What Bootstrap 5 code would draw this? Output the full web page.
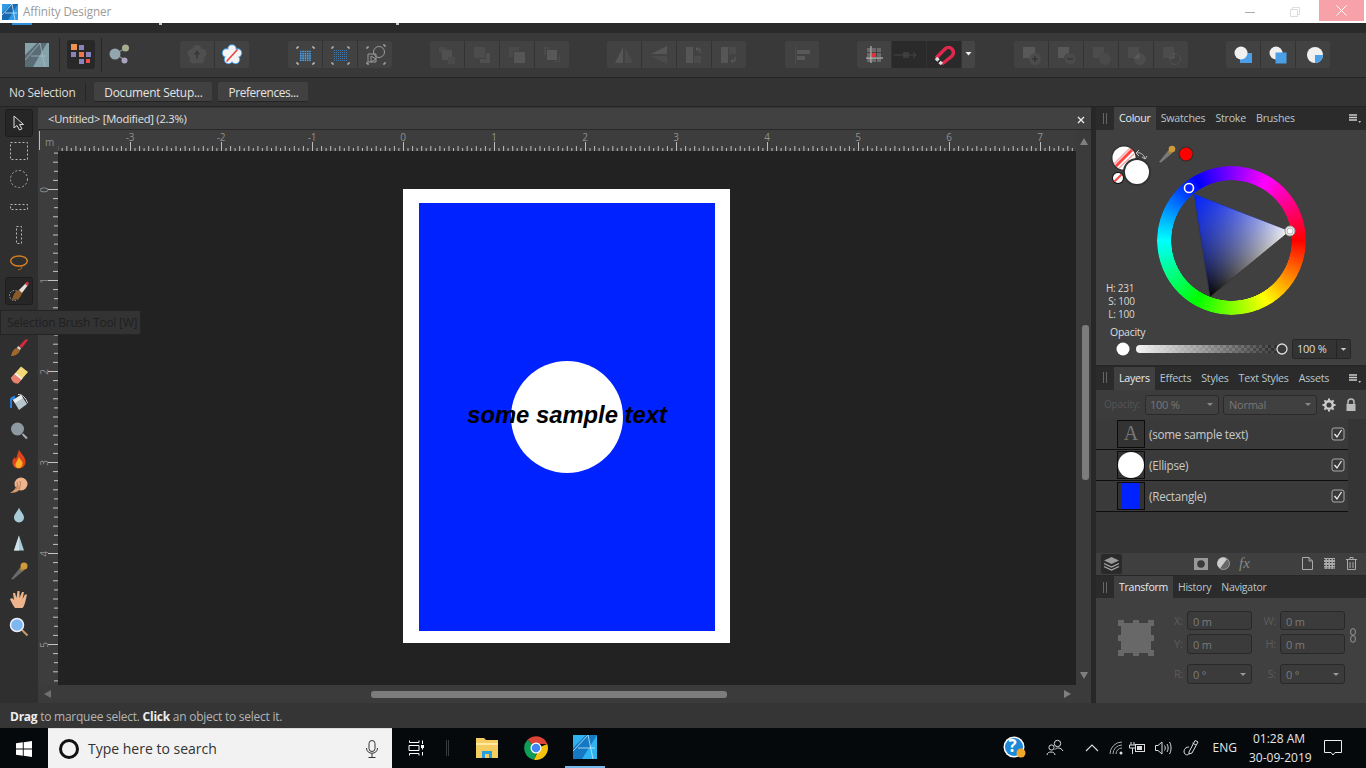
<!DOCTYPE html>
<html lang="en"><head><meta charset="utf-8"><title>Affinity Designer</title>
<link href="https://cdn.jsdelivr.net/npm/bootstrap@5.3.0/dist/css/bootstrap.min.css" rel="stylesheet">
<style>
html,body{height:768px;overflow:hidden;background:#000}
body{font-family:"Open Sans","Noto Sans",sans-serif;font-size:11.5px;letter-spacing:-.25px;color:#ddd;width:1366px}
svg{display:block;flex:none}
.titlebar{height:23px;background:#fff;color:#9a9a9a;font-size:11.7px;letter-spacing:-.1px}
.wintitle{margin-left:5px}
.winbtn{width:45px;height:21px}
.winmid{margin-right:1.5px}
.winclose{background:#f7a1a8;margin-right:2px}
.menustrip{height:10px;background:#2a2a2a}
.mstub{height:2px;background:#2f8fd8;width:20px;margin-left:12px}
.mtick{width:3px;height:2px;background:#ccc}
.toolbar{height:45px;background:#393939;border-bottom:1px solid #242424;padding:7px 0 0 25px}
.tsep{width:1px;height:34px;background:#262626;margin-top:-2px}
.tgroup{display:flex;gap:1px;height:27px;margin-top:1px;background:#333;border-radius:2px;overflow:hidden}
.tbtn{width:34px;height:27px;background:#424242}
.tbtn.on{background:#2a2a2a}
.tbtn.tiny{width:13px;background:#454545}
.personas{width:28px;height:29px;background:#282828;border-radius:3px;margin:0 6px 0 7px}
.contextbar{height:29px;background:#333;border-bottom:1px solid #242424;padding:1px 0 0 9px;font-size:11.9px;letter-spacing:-.25px}
.ctxsep{width:1px;height:19px;background:#262626;margin:-1px 8px 0 10px}
.ctxbtn{height:20px;background:#414141;border-bottom:1px solid #242424;border-radius:2px;color:#e4e4e4;margin-right:6px;margin-top:-1px;padding-top:1px;line-height:19px;white-space:nowrap;text-align:center}
.ctxdoc{width:118px}
.ctxpref{width:90px;letter-spacing:-.4px}
.workspace{height:596px;background:#272727}
.toolcol{width:38px;background:#2f2f2f;padding-top:2px}
.toolcell{width:28px;height:28px;margin-left:5px;border-radius:3px;border:1px solid transparent}
.toolcell.on{background:#262626;border-color:#1d1d1d}
.toolcell svg{margin:0 auto}
.tipbox{left:0;top:203px;width:141px;height:25px;background:#333;border:1px solid #242424;color:#202020;font-size:12px;padding-left:6px;line-height:23px;white-space:nowrap;z-index:5}
.docarea{width:1053px;margin-right:5px}
.doctab{height:23px;background:#414141;border-bottom:1px solid #282828;border-top:1px solid #353535;padding:2px 6px 0 10px;color:#e2e2e2;font-size:11.2px}
.stage{height:573px;display:grid;grid-template-columns:20px 1018px 15px;grid-template-rows:21px 534px 18px;background:#3d3d3d}
.rcorner{color:#8c8c8c;font-size:10px;padding:5px 0 0 7px}
.rcorner::before{content:"";position:absolute;left:1px;top:1px;height:19px;width:1px;background:#bbb}
.rlabel{color:#8f8f8f;font-size:10px;line-height:10px;transform:translateX(-50%);top:2px}
.vlabel{color:#8f8f8f;font-size:10px;line-height:10px;left:3px;transform:translateY(-50%) rotate(-90deg)}
.view{background:#222;overflow:hidden}
.artboard{left:345px;top:38px;width:327px;height:454px;background:#fff;padding:14px 15px 12px 16px}
.fillrect{width:296px;height:428px;background:#0022ff}
.orb{width:112px;height:112px;border-radius:50%;background:#fff}
.sampletext{font:italic bold 23.8px "Liberation Sans",sans-serif;letter-spacing:0;color:#000;white-space:nowrap;left:50%;top:50%;transform:translate(-50%,-56%)}
.vscroll{background:#3b3b3b;grid-row:1/3;grid-column:3}
.vthumb{left:6px;top:195px;width:7px;height:155px;background:#7c7c7c;border-radius:3px}
.hscroll{grid-column:1/4;background:#3b3b3b}
.hthumb{left:333px;top:6px;width:356px;height:7px;background:#7c7c7c;border-radius:3px}
.panelcol{width:270px}
.panel{background:#404040}
.ptabs{height:23px;background:#2b2b2b;font-size:10.7px;color:#b9c6cc}
.pgrip{width:18px;height:22px}
.ptab{padding:0 5px;line-height:22px;white-space:nowrap;height:23px}
.ptab.on{background:#404040;color:#e6edf0}
.ptabs.short{height:22px;font-size:10.5px}
.ptabs.short .ptab{height:22px;line-height:22px}
.colourbody{height:235px}
.hslblock{font-size:10px;line-height:13px;padding:0 0 0 10px;color:#d8d8d8}
.ringbox{width:149px;height:149px;margin-top:0}
.ring{width:149px;height:149px;border-radius:50%;background:conic-gradient(from 90deg,#f00,#ff0,#0f0,#0ff,#00f,#f0f,#f00);-webkit-mask:radial-gradient(circle,transparent 60px,#000 60.5px);mask:radial-gradient(circle,transparent 60px,#000 60.5px)}
.ringover{left:0;top:0}
.oplabel{padding-left:14px;font-size:10.5px;line-height:14px;margin-top:4px}
.sliderbar{width:151px;height:8px;border-radius:4px;background:linear-gradient(90deg,rgba(255,255,255,.95),rgba(255,255,255,0) 90%),repeating-conic-gradient(#4a4a4a 0 25%,#303030 0 50%) 0 0/6px 6px}
.spin{height:20px;background:#333;border:1px solid #262626;border-radius:2px;color:#ddd;font-size:11px}
.layerstools{height:29px;background:#3c3c3c;padding:1px 0 0 8px;color:#555;font-size:10px}
.selectbox{height:20px;background:#404040;border:1px solid #2a2a2a;border-radius:3px;color:#777;font-size:11px;padding:1px 0 0 4px}
.layerlist{height:134px;background:#353535}
.layerrow{height:31px;width:252px;background:#3a3a3a;border-bottom:1px solid #0e0e0e;padding-left:21px;color:#c9c9c9;font-size:11.7px}
.layerrow span{padding-top:3px}
.checkmark{margin-right:3px}
.thumbbox{width:28px;height:28px;background:#333;border:1px solid #0c0c0c;margin-right:4px}
.tiny-a{font:20px "Liberation Serif",serif;color:#777;letter-spacing:0}
.layersfoot{height:22px;background:#3f3f3f;border-bottom:0}
.stackbtn{width:21px;height:20px;background:#2a2a2a;margin-left:5px;border-radius:2px}
.panelgap{height:2px;background:#272727}
.xformbody{height:105px;padding-top:13px;display:grid;grid-template-columns:78px 13px 65px 28px 65px 21px;grid-template-rows:19px 20px 26px;row-gap:4px;color:#5c5c5c;font-size:11px}
.xformbody span{line-height:20px}
.xformbody .rowthree{margin-top:6px}
.xfield{background:#3b3b3b;border:1px solid #282828;border-radius:3px;color:#7a7a7a;font-size:11px;padding:1px 0 0 5px;line-height:17px}
.statusbar{height:25px;background:#353535;color:#b4b4b4;padding:3px 0 0 10px;font-size:12px}
.statusbar b{color:#eee;font-weight:700}
.taskbar{height:40px;background:#05090c;color:#e6e6e6}
.searchbox{width:344px;height:40px;background:#f2f2f2;border-top:1px solid #dcdcdc;margin-left:48px;padding-left:10px;color:#333;font-size:14px;letter-spacing:0}
.tasksel{width:40px;height:40px;border-bottom:2px solid #76b9ed;margin-left:7px}
.clockbox{font-size:12px;line-height:19px;text-align:center;letter-spacing:0;width:60px;white-space:nowrap}
.lang{font-size:12px;letter-spacing:0}
</style></head><body>

<div class="titlebar d-flex align-items-center">
 <svg width="16" height="16" viewBox="0 0 16 16" style="margin-left:2px"><rect width="16" height="16" fill="#2f9ae6"/><path d="M0 16V9L9 0H16L6 16Z" fill="#1869ad"/><path d="M0 11L10 0M10 0L13 16M3 9H15" stroke="#cdeaff" stroke-width=".8" fill="none"/></svg>
 <span class="wintitle flex-grow-1">Affinity Designer</span>
 <div class="winbtn d-flex align-items-center justify-content-center"><svg width="10" height="10" viewBox="0 0 10 10"><path d="M0 5.5H10" stroke="#aaa"/></svg></div>
 <div class="winbtn winmid d-flex align-items-center justify-content-center"><svg width="10" height="10" viewBox="0 0 10 10"><path d="M.5 2.5H7.5V9.5H.5ZM2.5 2.5V.5H9.5V7.5H7.5" stroke="#ddd" fill="none"/></svg></div>
 <div class="winbtn winclose d-flex align-items-center justify-content-center align-self-start"><svg width="11" height="11" viewBox="0 0 11 11"><path d="M.5.5L10.5 10.5M10.5.5L.5 10.5" stroke="#fff"/></svg></div>
</div>
<div class="menustrip d-flex align-items-start"><div class="mstub"></div><div class="mtick" style="margin-left:127px"></div><div class="mtick" style="margin-left:234px"></div></div>

<div class="toolbar d-flex align-items-start">
 <svg width="24" height="24" viewBox="0 0 24 24" style="margin-top:3px"><rect width="24" height="24" fill="#86a3ab"/><path d="M0 24V12L12 0H22L8 24Z" fill="#5a6d77"/><path d="M0 17L15 0M15 0L20 24M6 13H21" stroke="#a9c0c7" stroke-width=".7" fill="none"/></svg>
 <div class="tsep" style="margin-left:10px"></div>
 <div class="personas"><svg width="28" height="29" viewBox="0 0 28 29"><rect x="4" y="4" width="6" height="6" fill="#f0914f"/><rect x="12" y="5" width="5" height="5" fill="#8a83c0"/><rect x="4" y="12" width="5" height="5" fill="#8a83c0"/><rect x="12" y="12" width="5" height="5" fill="#f0744a"/><rect x="19" y="12" width="5" height="5" fill="#8a83c0"/><rect x="12" y="19" width="5" height="5" fill="#8a83c0"/><rect x="19" y="19" width="4" height="4" fill="#ee5050"/></svg></div>
 <div class="tsep"></div>
 <svg width="22" height="22" viewBox="0 0 22 22" style="margin:4px 0 0 7px"><path d="M6 10L17 4M6 10L16 16" stroke="#8a8f90" stroke-width="1.2"/><circle cx="6" cy="10" r="5.500" fill="#93a6b0"/><circle cx="16.500" cy="4" r="3.500" fill="#a3ae8f"/><circle cx="15.500" cy="16.500" r="3" fill="#a9a3bf"/></svg>

 <div class="tgroup" style="margin-left:49px">
  <div class="tbtn"><svg width="34" height="27" viewBox="0 0 34 27"><g fill="#4f4f4f"><circle cx="17" cy="8.5" r="4.5"/><circle cx="22" cy="12.2" r="4.5"/><circle cx="20" cy="18" r="4.5"/><circle cx="14" cy="18" r="4.5"/><circle cx="12" cy="12.2" r="4.5"/></g><path d="M17 18V11M14.500 13.500L17 10.500L19.500 13.500" stroke="#393939" stroke-width="1.500" fill="none"/></svg></div>
  <div class="tbtn"><svg width="34" height="27" viewBox="0 0 34 27"><g fill="#4aa0e6"><circle cx="17" cy="8" r="4.700"/><circle cx="22.500" cy="12" r="4.700"/><circle cx="20.500" cy="18.500" r="4.700"/><circle cx="13.500" cy="18.500" r="4.700"/><circle cx="11.500" cy="12" r="4.700"/></g><g fill="#f4f4f4"><circle cx="17" cy="8" r="3.700"/><circle cx="22.500" cy="12" r="3.700"/><circle cx="20.500" cy="18.500" r="3.700"/><circle cx="13.500" cy="18.500" r="3.700"/><circle cx="11.500" cy="12" r="3.700"/><circle cx="17" cy="14" r="5"/></g><path d="M11.500 20.500L22.500 8.500" stroke="#e8403c" stroke-width="1.500"/></svg></div>
 </div>
 <div class="tgroup" style="margin-left:39px">
  <div class="tbtn"><svg width="34" height="27" viewBox="0 0 34 27"><path d="M9 8V6H11M24 6H26V8M26 21V23H24M11 23H9V21" stroke="#ddd" fill="none"/><path d="M12 10.500H23M12 12.700H23M12 14.900H23M12 17.100H23M12 19.300H23" stroke="#4a9fe6" stroke-width="1.600" stroke-dasharray="1.600 .7"/></svg></div>
  <div class="tbtn"><svg width="34" height="27" viewBox="0 0 34 27"><path d="M9 8V6H11M24 6H26V8M26 21V23H24M11 23H9V21" stroke="#ccc" fill="none"/><path d="M11 9.500H24M11 11.500H24M11 13.500H24M11 15.500H24M11 17.500H24M11 19.500H24" stroke="#3b78ad" stroke-dasharray="1 1"/></svg></div>
  <div class="tbtn"><svg width="34" height="27" viewBox="0 0 34 27"><path d="M9 8V6H11M25 4H27V6M27 21V23H25M11 23H9V21" stroke="#bbb" fill="none"/><path d="M10 13H18V21H10Z" fill="none" stroke="#999"/><circle cx="21" cy="11" r="5.500" fill="none" stroke="#999"/><path d="M13 15L18 18L13 21Z" fill="none" stroke="#999"/></svg></div>
 </div>
 <div class="tgroup" style="margin-left:38px">
  <div class="tbtn"><svg width="34" height="27" viewBox="0 0 34 27"><rect x="9" y="6" width="7" height="6" fill="#4a4a4a"/><rect x="12" y="9" width="10" height="10" fill="#505050"/><rect x="18" y="16" width="7" height="7" fill="#4a4a4a"/></svg></div>
  <div class="tbtn"><svg width="34" height="27" viewBox="0 0 34 27"><rect x="9" y="6" width="11" height="11" fill="#4c4c4c"/><path d="M25 12V22H15V18H21V12Z" fill="#505050"/></svg></div>
  <div class="tbtn"><svg width="34" height="27" viewBox="0 0 34 27"><path d="M9 6H19V10H13V16H9Z" fill="#4a4a4a"/><rect x="14" y="11" width="11" height="11" fill="#565656"/></svg></div>
  <div class="tbtn"><svg width="34" height="27" viewBox="0 0 34 27"><path d="M9 6H15V8H11V14H9Z" fill="#4a4a4a"/><rect x="12" y="9" width="10" height="10" fill="#585858"/><path d="M25 14V21H19V20H24V14Z" fill="#4a4a4a"/></svg></div>
 </div>
 <div class="tgroup" style="margin-left:38px">
  <div class="tbtn"><svg width="34" height="27" viewBox="0 0 34 27"><path d="M16 6V22H8Z" fill="#565656"/><path d="M18 6V22H26Z" fill="#4b4b4b"/></svg></div>
  <div class="tbtn"><svg width="34" height="27" viewBox="0 0 34 27"><path d="M25 5V13H9Z" fill="#565656"/><path d="M25 15V23L9 15Z" fill="#4b4b4b"/></svg></div>
  <div class="tbtn"><svg width="34" height="27" viewBox="0 0 34 27"><rect x="9" y="6" width="7" height="16" fill="#565656"/><rect x="17" y="15" width="7" height="7" fill="#4b4b4b"/><path d="M23 12V8H19M21 6L19 8L21 10" stroke="#5c5c5c" fill="none"/></svg></div>
  <div class="tbtn"><svg width="34" height="27" viewBox="0 0 34 27"><rect x="9" y="6" width="7" height="16" fill="#565656"/><rect x="17" y="6" width="7" height="7" fill="#4b4b4b"/><path d="M23 16V20H19M21 18L19 20L21 22" stroke="#5c5c5c" fill="none"/></svg></div>
 </div>
 <div class="tgroup" style="margin-left:39px">
  <div class="tbtn"><svg width="34" height="27" viewBox="0 0 34 27"><path d="M10.500 5V23" stroke="#4c4c4c"/><rect x="12" y="9" width="13" height="4" fill="#585858"/><rect x="12" y="15" width="8" height="4" fill="#585858"/></svg></div>
 </div>
 <div class="tgroup" style="margin-left:38px">
  <div class="tbtn"><svg width="34" height="27" viewBox="0 0 34 27"><g fill="#6a6a6a"><rect x="10" y="7" width="4" height="4"/><rect x="15" y="7" width="4" height="4"/><rect x="20" y="7" width="4" height="4"/><rect x="10" y="12" width="4" height="4"/><rect x="20" y="12" width="4" height="4"/><rect x="10" y="17" width="4" height="4"/><rect x="15" y="17" width="4" height="4"/><rect x="20" y="17" width="4" height="4"/></g><rect x="15" y="12" width="4" height="4" fill="#e43030"/><path d="M14 5V22M9 17H26" stroke="#ccc"/></svg></div>
  <div class="tbtn on"><svg width="34" height="27" viewBox="0 0 34 27"><rect x="11" y="11" width="6" height="6" fill="#3c3c3c"/><path d="M2 14H24M21 11L24 14L21 17" stroke="#444" fill="none"/></svg></div>
  <div class="tbtn on"><svg width="34" height="27" viewBox="0 0 34 27"><path d="M9 17L18 8A4.500 4.500 0 0 1 25 15L15 23" fill="none" stroke="#e0284c" stroke-width="3.500"/><path d="M9 17L11.500 19.500M15 23L12.500 21" stroke="#ddd" stroke-width="3.500"/></svg></div>
  <div class="tbtn tiny"><svg width="13" height="27" viewBox="0 0 13 27"><path d="M3.500 11H9.500L6.500 14.500Z" fill="#eee"/></svg></div>
 </div>
 <div class="tgroup" style="margin-left:39px">
  <div class="tbtn"><svg width="34" height="27" viewBox="0 0 34 27"><rect x="9" y="6" width="12" height="11" fill="#585858"/><circle cx="21" cy="18" r="6" fill="#4c4c4c"/><path d="M18 18H24M21 15V21" stroke="#2c2c2c"/></svg></div>
  <div class="tbtn"><svg width="34" height="27" viewBox="0 0 34 27"><path d="M9 6H20V12A6 6 0 0 0 15 17H9Z" fill="#585858"/><circle cx="21" cy="18" r="5.500" fill="#4a4a4a"/><path d="M18 18H24" stroke="#2c2c2c"/></svg></div>
  <div class="tbtn"><svg width="34" height="27" viewBox="0 0 34 27"><rect x="9" y="6" width="11" height="11" fill="#4c4c4c"/><path d="M15 17H20V12A6 6 0 0 1 15 17Z" fill="#3a3a3a"/><circle cx="21" cy="18" r="6" fill="#4a4a4a"/></svg></div>
  <div class="tbtn"><svg width="34" height="27" viewBox="0 0 34 27"><rect x="9" y="6" width="11" height="11" fill="#4c4c4c"/><circle cx="21" cy="18" r="6" fill="#4c4c4c"/><path d="M15 17H20V12" fill="#5a5a5a" stroke="#5a5a5a"/></svg></div>
  <div class="tbtn"><svg width="34" height="27" viewBox="0 0 34 27"><rect x="9" y="6" width="11" height="11" fill="#4c4c4c"/><circle cx="21" cy="18" r="5.500" fill="none" stroke="#505050"/><path d="M15 17H20V12" fill="none" stroke="#5a5a5a"/></svg></div>
 </div>
 <div class="tgroup" style="margin-left:38px">
  <div class="tbtn"><svg width="34" height="27" viewBox="0 0 34 27"><path d="M17 12H26V22H14V17Z" fill="#4a9fe6"/><circle cx="15" cy="12" r="6.500" fill="#f0f0f0"/></svg></div>
  <div class="tbtn"><svg width="34" height="27" viewBox="0 0 34 27"><circle cx="15" cy="12" r="6.500" fill="#f0f0f0"/><rect x="14.500" y="11.500" width="11" height="11" fill="#4a9fe6"/></svg></div>
  <div class="tbtn"><svg width="34" height="27" viewBox="0 0 34 27"><circle cx="19" cy="14" r="8" fill="#f0f0f0"/><path d="M19 14H27A8 8 0 0 1 19 22Z" fill="#4a9fe6"/></svg></div>
 </div>
</div>

<div class="contextbar d-flex align-items-center">
 <span>No Selection</span><div class="ctxsep"></div>
 <div class="ctxbtn ctxdoc">Document Setup...</div><div class="ctxbtn ctxpref">Preferences...</div>
</div>

<div class="workspace d-flex">
 <div class="toolcol position-relative">
  <div class="toolcell on d-flex align-items-center"><svg width="16" height="18" viewBox="0 0 16 18"><path d="M3 2V14L6 11.500L8.500 16L11 14.800L8.500 10.500H12.500Z" fill="#2a2a2a" stroke="#ddd"/></svg></div>
  <div class="toolcell d-flex align-items-center"><svg width="20" height="20" viewBox="0 0 20 20"><rect x="1.500" y="1.500" width="17" height="17" fill="none" stroke="#bbb" stroke-dasharray="2 2"/></svg></div>
  <div class="toolcell d-flex align-items-center"><svg width="20" height="20" viewBox="0 0 20 20"><circle cx="10" cy="10" r="8.500" fill="none" stroke="#aaa" stroke-dasharray="2 2"/></svg></div>
  <div class="toolcell d-flex align-items-center"><svg width="20" height="8" viewBox="0 0 20 8"><rect x="1.500" y="1.500" width="17" height="5" fill="none" stroke="#bbb" stroke-dasharray="2 2"/></svg></div>
  <div class="toolcell d-flex align-items-center"><svg width="8" height="20" viewBox="0 0 8 20"><rect x="1.500" y="1.500" width="5" height="17" fill="none" stroke="#bbb" stroke-dasharray="2 2"/></svg></div>
  <div class="toolcell d-flex align-items-center"><svg width="20" height="18" viewBox="0 0 20 18"><ellipse cx="10" cy="7" rx="8.300" ry="5" fill="none" stroke="#d97f22" stroke-width="1.500"/><path d="M9 12C14 12 14 15 9 16" fill="none" stroke="#b86d20"/></svg></div>
  <div class="toolcell on d-flex align-items-center"><svg width="22" height="22" viewBox="0 0 22 22"><circle cx="6.500" cy="15.500" r="5" fill="none" stroke="#aaa" stroke-dasharray="1.500 1.500"/><path d="M4 20C5 15 7 11 11 10L14 13C13 18 9 20 4 20Z" fill="#8a5a2a"/><path d="M11 10L18 3L20 5L14 13Z" fill="#e8e0d8"/><path d="M17 4L19 1.500L21 3L19.500 6Z" fill="#d8344a"/></svg></div>
  <div class="toolcell"></div>
  <div class="toolcell d-flex align-items-center"><svg width="20" height="20" viewBox="0 0 20 20"><path d="M2 19C3 15 4 12 8 11L11 13C10 17 6 19 2 19Z" fill="#a0682e"/><path d="M8 11L9 9L12 11L11 13Z" fill="#ddd"/><path d="M10 9L17 2L19 3L13 11Z" fill="#d8283c"/></svg></div>
  <div class="toolcell d-flex align-items-center"><svg width="20" height="20" viewBox="0 0 20 20"><path d="M2 13L12 1.500L19 7L9 18.500Z" fill="#f4d878"/><path d="M2 13L6 8.500L13 14L9 18.500C6 19 3 17 2 13Z" fill="#ea8070"/><path d="M6 8.500L13 14" stroke="#eee" stroke-width="1.800"/></svg></div>
  <div class="toolcell d-flex align-items-center"><svg width="20" height="20" viewBox="0 0 20 20"><path d="M1 7C1 4 4 3 6 3V7L3 7V15H1Z" fill="#2a80d8"/><path d="M4 7L12 2L18 11L10 17Z" fill="#b7c6cc"/><path d="M4 7L12 2L14 5L6 10Z" fill="#e8eef0"/><path d="M9 1.500C13 1 17 5 18.500 10" fill="none" stroke="#ddd"/></svg></div>
  <div class="toolcell d-flex align-items-center"><svg width="20" height="20" viewBox="0 0 20 20"><circle cx="8.500" cy="8" r="6.500" fill="#8d9aa1"/><path d="M13.500 13L18 17.500" stroke="#aab" stroke-width="2"/></svg></div>
  <div class="toolcell d-flex align-items-center"><svg width="16" height="20" viewBox="0 0 16 20"><path d="M8 .5C9 4 14 7 14.500 12C15 17 11 19.500 8 19.500C4 19.500 1 17 1.500 12C2 10 3 9 4 8C4 10 5 10 5.500 9C6 6 7 4 8 .5Z" fill="#e0441a"/><path d="M8 8C9 11 12 12 11.500 15C11 18 9 19 8 19C5 19 4 17 4.500 15C5 13 7 11 8 8Z" fill="#fbb024"/></svg></div>
  <div class="toolcell d-flex align-items-center"><svg width="20" height="20" viewBox="0 0 20 20"><circle cx="12" cy="7" r="6.500" fill="#eeb48c"/><path d="M9 7C7 11 5 14 1 16C5 16 9 15 11 12" fill="#d89a72"/><path d="M8 5C9 8 8 10 7 12M11 4C12 7 11 10 10 12" stroke="#b77c58" fill="none"/></svg></div>
  <div class="toolcell d-flex align-items-center"><svg width="12" height="16" viewBox="0 0 12 16"><path d="M6 .5C7 4 11 7 11 10.500A5 5 0 0 1 1 10.500C1 7 5 4 6 .5Z" fill="#a9cbd8"/></svg></div>
  <div class="toolcell d-flex align-items-center"><svg width="12" height="16" viewBox="0 0 12 16"><path d="M6 .5L11 15.500H1Z" fill="#a9cbd8"/><path d="M6 .5L1 15.500H6Z" fill="#cfe2ea"/></svg></div>
  <div class="toolcell d-flex align-items-center"><svg width="20" height="20" viewBox="0 0 20 20"><path d="M2 18L10 8L13 11L4 18.500Z" fill="#6a6a6a"/><path d="M10 8L13 5L16 8L13 11Z" fill="#9b8348"/><circle cx="15" cy="5" r="3.500" fill="#d09a3a"/></svg></div>
  <div class="toolcell d-flex align-items-center"><svg width="20" height="20" viewBox="0 0 20 20"><path d="M6 19C3 15 2 12 1 10L3 9L5 11L4 4H6L7.500 9L8.500 2H10.500L10.500 9L13 3H15L13.500 10L16 5.500H18L16 14C15 17 14 19 13 19Z" fill="#eeb48c"/></svg></div>
  <div class="toolcell d-flex align-items-center"><svg width="20" height="20" viewBox="0 0 20 20"><path d="M13 13L18.500 18.500" stroke="#c99a6a" stroke-width="2"/><circle cx="8" cy="8" r="6.500" fill="#7db7ef" stroke="#eef" stroke-width="1.500"/></svg></div>
  <div class="tipbox position-absolute">Selection Brush Tool [W]</div>
 </div>

 <div class="docarea d-flex flex-column">
  <div class="doctab d-flex align-items-center justify-content-between"><span>&lt;Untitled&gt; [Modified] (2.3%)</span><svg width="8" height="8" viewBox="0 0 8 8"><path d="M1 1L7 7M7 1L1 7" stroke="#eee" stroke-width="1.300"/></svg></div>
  <div class="stage">
   <div class="rcorner position-relative">m</div>
   <div class="position-relative overflow-hidden">
    <svg class="position-absolute bottom-0 start-0" width="1018" height="12" viewBox="0 0 1018 12"><defs><pattern id="hticks" x="72" y="0" width="91" height="12" patternUnits="userSpaceOnUse"><path d="M.5 3V12M5 9V12M9.600 7V12M14.100 9V12M18.700 7V12M23.200 9V12M27.800 7V12M32.300 9V12M36.900 7V12M41.400 9V12M46 7V12M50.500 9V12M55.100 7V12M59.600 9V12M64.200 7V12M68.700 9V12M73.300 7V12M77.800 9V12M82.400 7V12M86.900 9V12" stroke="#bdbdbd" fill="none"/></pattern></defs><rect width="1018" height="12" fill="url(#hticks)"/></svg>
    <span class="rlabel position-absolute" style="left:72px">-3</span><span class="rlabel position-absolute" style="left:163px">-2</span><span class="rlabel position-absolute" style="left:254px">-1</span><span class="rlabel position-absolute" style="left:345px">0</span><span class="rlabel position-absolute" style="left:436px">1</span><span class="rlabel position-absolute" style="left:527px">2</span><span class="rlabel position-absolute" style="left:618px">3</span><span class="rlabel position-absolute" style="left:709px">4</span><span class="rlabel position-absolute" style="left:800px">5</span><span class="rlabel position-absolute" style="left:891px">6</span><span class="rlabel position-absolute" style="left:982px">7</span>
   </div>
   <div class="vscroll position-relative">
    <svg class="position-absolute" style="left:3px;top:7px" width="10" height="9" viewBox="0 0 10 9"><path d="M5 1L9 8H1Z" fill="#808080"/></svg>
    <div class="vthumb position-absolute"></div>
    <svg class="position-absolute" style="left:3px;top:541px" width="10" height="9" viewBox="0 0 10 9"><path d="M5 8L9 1H1Z" fill="#808080"/></svg>
   </div>
   <div class="position-relative">
    <svg class="position-absolute top-0 end-0" width="10" height="534" viewBox="0 0 10 534"><defs><pattern id="vticks" x="0" y="38" width="10" height="91" patternUnits="userSpaceOnUse"><path d="M0 .5H10M5 9.600H10M6 18.700H10M5 27.800H10M6 36.900H10M5 46H10M6 55.100H10M5 64.200H10M6 73.300H10M5 82.400H10" stroke="#c4c4c4" fill="none"/></pattern></defs><rect width="10" height="534" fill="url(#vticks)"/></svg>
    <span class="vlabel position-absolute" style="top:39px">0</span><span class="vlabel position-absolute" style="top:130px">1</span><span class="vlabel position-absolute" style="top:221px">2</span><span class="vlabel position-absolute" style="top:312px">3</span><span class="vlabel position-absolute" style="top:403px">4</span><span class="vlabel position-absolute" style="top:494px">5</span>
   </div>
   <div class="view position-relative">
    <div class="artboard position-absolute">
     <div class="fillrect position-relative d-flex align-items-center justify-content-center">
      <div class="orb"></div>
      <span class="sampletext position-absolute">some sample text</span>
     </div>
    </div>
   </div>
   <div class="hscroll position-relative">
    <svg class="position-absolute" style="left:5px;top:4px" width="9" height="10" viewBox="0 0 9 10"><path d="M1 5L8 1V9Z" fill="#707070"/></svg>
    <div class="hthumb position-absolute"></div>
    <svg class="position-absolute" style="left:1025px;top:4px" width="9" height="10" viewBox="0 0 9 10"><path d="M8 5L1 1V9Z" fill="#808080"/></svg>
   </div>
  </div>
 </div>

 <div class="panelcol d-flex flex-column">
  <div class="panel">
   <div class="ptabs d-flex">
    <div class="pgrip d-flex align-items-center justify-content-center"><svg width="4" height="11" viewBox="0 0 4 11"><path d="M.5 0V11M3.500 0V11" stroke="#666"/></svg></div>
    <div class="ptab on">Colour</div><div class="ptab">Swatches</div><div class="ptab">Stroke</div><div class="ptab">Brushes</div>
    <div class="ms-auto d-flex align-items-center" style="margin-right:5px"><svg width="12" height="9" viewBox="0 0 12 9"><path d="M0 1H8M0 3.500H8M0 6H8" stroke="#ccc" stroke-width="1.500"/><path d="M9.500 7H12L10.700 9Z" fill="#ccc"/></svg></div>
   </div>
   <div class="colourbody">
    <div class="d-flex" style="padding-top:14px">
     <div class="d-flex flex-column justify-content-between" style="width:61px;height:177px">
      <svg width="50" height="44" viewBox="0 0 50 44" style="margin-left:11px"><defs><clipPath id="clipa"><circle cx="17" cy="14" r="11.500"/></clipPath><clipPath id="clipb"><circle cx="11" cy="34" r="5"/></clipPath></defs><circle cx="17" cy="14" r="13" fill="#333"/><g clip-path="url(#clipa)"><rect width="40" height="30" fill="#fff"/><path d="M5 26L28 3" stroke="#f44" stroke-width="3"/><path d="M5 22L24 3M10 26L30 7" stroke="#f9a8a8" stroke-width="1.500"/></g><circle cx="30" cy="28" r="14" fill="#333"/><circle cx="30" cy="28" r="12" fill="#fff"/><circle cx="11" cy="34" r="6" fill="#111"/><g clip-path="url(#clipb)"><rect x="5" y="28" width="12" height="12" fill="#fff"/><path d="M6 39L16 29" stroke="#f44" stroke-width="2"/></g><path d="M29 9C33 8 37 10 38 15M29 9L32 6M29 9L32 12M38 15L35 13M38 15L40 12" fill="none" stroke="#bbb"/></svg>
      <div class="hslblock"><div>H: 231</div><div>&nbsp;S: 100</div><div>&nbsp;L: 100</div></div>
     </div>
     <div>
      <div class="d-flex align-items-center" style="height:22px;gap:2px;padding:0 0 2px 1px">
       <svg width="18" height="18" viewBox="0 0 18 18"><path d="M1 17L9 7L12 10L3 17.500Z" fill="#7a7a7a"/><path d="M9 7L12 4L15 7L12 10Z" fill="#9b8348"/><circle cx="14" cy="4" r="3.300" fill="#cf9a3c"/></svg>
       <svg width="16" height="16" viewBox="0 0 16 16"><circle cx="8" cy="8" r="7.500" fill="#2c2c2c"/><circle cx="8" cy="8" r="6.500" fill="#f00"/></svg>
      </div>
      <div class="ringbox position-relative">
       <div class="ring"></div>
       <svg class="ringover position-absolute" width="149" height="149" viewBox="0 0 149 149"><defs><linearGradient id="bwgrad" gradientUnits="userSpaceOnUse" x1="53" y1="131" x2="133" y2="65"><stop offset="0" stop-color="#000"/><stop offset="1" stop-color="#fff"/></linearGradient><linearGradient id="bluegrad" gradientUnits="userSpaceOnUse" x1="37" y1="28" x2="93" y2="98"><stop offset="0" stop-color="#0022ff"/><stop offset="1" stop-color="#0022ff" stop-opacity="0"/></linearGradient></defs><path d="M37 28L133 65L53 131Z" fill="url(#bwgrad)" stroke="#333" stroke-width=".8"/><path d="M37 28L133 65L53 131Z" fill="url(#bluegrad)"/><circle cx="32" cy="22" r="4.500" fill="#0a22ff" stroke="#fff" stroke-width="1.600"/><circle cx="133" cy="65" r="5" fill="#f2f2f2" stroke="#999"/><circle cx="133" cy="65" r="3" fill="#fff" stroke="#888" stroke-width=".6"/></svg>
      </div>
     </div>
    </div>
    <div class="oplabel">Opacity</div>
    <div class="d-flex align-items-center" style="padding-left:20px">
     <svg width="14" height="14" viewBox="0 0 14 14"><circle cx="7" cy="7" r="6.500" fill="#fff"/></svg>
     <div class="position-relative" style="margin-left:6px;width:151px;height:14px"><div class="sliderbar" style="margin-top:3px"></div><svg class="position-absolute" style="right:-1px;top:1px" width="12" height="12" viewBox="0 0 12 12"><circle cx="6" cy="6" r="5" fill="#3a3a3a" stroke="#ddd" stroke-width="1.300"/></svg></div>
     <div class="spin d-flex align-items-center" style="margin-left:5px;width:59px"><span class="flex-grow-1 ps-1">100 %</span><svg class="border-start border-dark" width="14" height="18" viewBox="0 0 14 18"><path d="M4 8H10L7 11Z" fill="#ccc"/></svg></div>
    </div>
   </div>
  </div>
  <div class="panelgap"></div>
  <div class="panel">
   <div class="ptabs d-flex">
    <div class="pgrip d-flex align-items-center justify-content-center"><svg width="4" height="11" viewBox="0 0 4 11"><path d="M.5 0V11M3.500 0V11" stroke="#666"/></svg></div>
    <div class="ptab on">Layers</div><div class="ptab">Effects</div><div class="ptab">Styles</div><div class="ptab">Text Styles</div><div class="ptab">Assets</div>
    <div class="ms-auto d-flex align-items-center" style="margin-right:5px"><svg width="12" height="9" viewBox="0 0 12 9"><path d="M0 1H8M0 3.500H8M0 6H8" stroke="#ccc" stroke-width="1.500"/><path d="M9.500 7H12L10.700 9Z" fill="#ccc"/></svg></div>
   </div>
   <div class="layerstools d-flex align-items-center">
    <span style="width:41px">Opacity:</span>
    <div class="selectbox d-flex align-items-center justify-content-between" style="width:74px">100 %<svg width="14" height="10" viewBox="0 0 14 10"><path d="M3 3H9L6 6Z" fill="#888"/></svg></div>
    <div class="selectbox d-flex align-items-center justify-content-between" style="width:94px;margin-left:4px;padding-left:5px">Normal<svg width="14" height="10" viewBox="0 0 14 10"><path d="M3 3H9L6 6Z" fill="#888"/></svg></div>
    <svg width="14" height="14" viewBox="0 0 14 14" style="margin-left:5px"><circle cx="7" cy="7" r="3.800" fill="none" stroke="#ccc" stroke-width="2.500"/><path d="M7 .5V13.500M.5 7H13.500M2.400 2.400L11.600 11.600M11.600 2.400L2.400 11.600" stroke="#ccc" stroke-width="2" stroke-dasharray="2 9.200"/></svg>
    <svg width="12" height="14" viewBox="0 0 12 14" style="margin-left:9px"><path d="M3 6V4A3 3 0 0 1 9 4V6" fill="none" stroke="#bbb" stroke-width="1.500"/><rect x="1.500" y="6" width="9" height="7" fill="#bbb"/></svg>
   </div>
   <div class="layerlist">
    <div class="layerrow d-flex align-items-center"><div class="thumbbox d-flex align-items-center justify-content-center tiny-a">A</div><span class="flex-grow-1">(some sample text)</span><svg class="checkmark" width="14" height="14" viewBox="0 0 14 14"><rect x="1" y="1" width="12" height="12" rx="2" fill="none" stroke="#aaa"/><path d="M3.500 7L6 10L10.500 3" fill="none" stroke="#eee" stroke-width="1.300"/></svg></div>
    <div class="layerrow d-flex align-items-center"><div class="thumbbox d-flex align-items-center justify-content-center"><svg width="26" height="26" viewBox="0 0 26 26"><circle cx="13" cy="13" r="13" fill="#fff"/></svg></div><span class="flex-grow-1">(Ellipse)</span><svg class="checkmark" width="14" height="14" viewBox="0 0 14 14"><rect x="1" y="1" width="12" height="12" rx="2" fill="none" stroke="#aaa"/><path d="M3.500 7L6 10L10.500 3" fill="none" stroke="#eee" stroke-width="1.300"/></svg></div>
    <div class="layerrow d-flex align-items-center"><div class="thumbbox d-flex align-items-center justify-content-center"><svg width="18" height="26" viewBox="0 0 18 26"><rect width="18" height="26" fill="#0022ff"/></svg></div><span class="flex-grow-1">(Rectangle)</span><svg class="checkmark" width="14" height="14" viewBox="0 0 14 14"><rect x="1" y="1" width="12" height="12" rx="2" fill="none" stroke="#aaa"/><path d="M3.500 7L6 10L10.500 3" fill="none" stroke="#eee" stroke-width="1.300"/></svg></div>
   </div>
   <div class="layersfoot d-flex align-items-center">
    <div class="stackbtn d-flex align-items-center justify-content-center"><svg width="17" height="15" viewBox="0 0 17 15"><path d="M8.500 1L16 4.500L8.500 8L1 4.500Z" fill="#999"/><path d="M1 7.500L8.500 11L16 7.500M1 10.500L8.500 14L16 10.500" fill="none" stroke="#aaa" stroke-width="1.300"/></svg></div>
    <svg width="14" height="12" viewBox="0 0 14 12" style="margin-left:72px"><rect width="14" height="12" fill="#999"/><circle cx="7" cy="6" r="3.800" fill="#3a3a3a"/></svg>
    <svg width="13" height="13" viewBox="0 0 13 13" style="margin-left:9px"><circle cx="6.500" cy="6.500" r="6" fill="#666" stroke="#999"/><path d="M6.500 .5A6 6 0 0 0 3 11.500L10 2Z" fill="#ccc"/></svg>
    <span style="margin-left:9px;font:italic 15px 'Liberation Serif',serif;color:#888;letter-spacing:0;line-height:15px">fx</span>
    <svg width="11" height="13" viewBox="0 0 11 13" style="margin-left:52px"><path d="M.5 .5H7L10.500 4V12.500H.5ZM7 .5V4H10.500" fill="none" stroke="#aaa"/></svg>
    <svg width="11" height="11" viewBox="0 0 11 11" style="margin-left:11px"><rect width="11" height="11" fill="#aaa"/><path d="M0 1.500H11M0 4.500H11M0 7.500H11M0 10H11" stroke="#3a3a3a" stroke-dasharray="1.500 1.500"/></svg>
    <svg width="11" height="13" viewBox="0 0 11 13" style="margin-left:11px"><path d="M0 2.500H11M4 2V.5H7V2M1.500 3V12.500H9.500V3M4 5V11M7 5V11" fill="none" stroke="#aaa"/></svg>
   </div>
  </div>
  <div class="panelgap"></div>
  <div class="panel flex-grow-1">
   <div class="ptabs short d-flex">
    <div class="pgrip d-flex align-items-center justify-content-center"><svg width="4" height="11" viewBox="0 0 4 11"><path d="M.5 0V11M3.500 0V11" stroke="#666"/></svg></div>
    <div class="ptab on">Transform</div><div class="ptab">History</div><div class="ptab">Navigator</div>
   </div>
   <div class="xformbody">
    <svg class="align-self-start" width="36" height="36" viewBox="0 0 36 36" style="grid-row:1/4;grid-column:1;margin:9px 0 0 22px"><rect x="3" y="3" width="30" height="30" fill="#686868"/><g fill="#686868"><rect width="6" height="6"/><rect x="15" width="6" height="6"/><rect x="30" width="6" height="6"/><rect y="15" width="6" height="6"/><rect x="30" y="15" width="6" height="6"/><rect y="30" width="6" height="6"/><rect x="15" y="30" width="6" height="6"/><rect x="30" y="30" width="6" height="6"/></g></svg>
    <span style="grid-column:2;grid-row:1">X:</span><div class="xfield" style="grid-column:3;grid-row:1">0 m</div><span class="text-end pe-1" style="grid-column:4;grid-row:1">W:</span><div class="xfield" style="grid-column:5;grid-row:1">0 m</div>
    <span style="grid-column:2;grid-row:2">Y:</span><div class="xfield" style="grid-column:3;grid-row:2">0 m</div><span class="text-end pe-1" style="grid-column:4;grid-row:2">H:</span><div class="xfield" style="grid-column:5;grid-row:2">0 m</div>
    <svg class="align-self-center" width="6" height="15" viewBox="0 0 6 15" style="grid-column:6;grid-row:1/3;margin:5px 0 0 5px"><rect x=".7" y=".7" width="4.600" height="6.500" rx="2.300" fill="none" stroke="#999"/><rect x=".7" y="7.700" width="4.600" height="6.500" rx="2.300" fill="none" stroke="#999"/></svg>
    <span class="rowthree" style="grid-column:2;grid-row:3">R:</span><div class="xfield rowthree d-flex justify-content-between" style="grid-column:3;grid-row:3">0 °<svg width="14" height="18" viewBox="0 0 14 18"><path d="M3 7H9L6 10Z" fill="#999"/></svg></div><span class="rowthree text-end pe-1" style="grid-column:4;grid-row:3">S:</span><div class="xfield rowthree d-flex justify-content-between" style="grid-column:5;grid-row:3">0 °<svg width="14" height="18" viewBox="0 0 14 18"><path d="M3 7H9L6 10Z" fill="#999"/></svg></div>
   </div>
  </div>
 </div>
</div>

<div class="statusbar d-flex align-items-center"><span><b>Drag</b> to marquee select. <b>Click</b> an object to select it.</span></div>

<div class="taskbar d-flex align-items-center position-relative">
 <svg class="position-absolute" style="left:16px;top:13px" width="16" height="16" viewBox="0 0 16 16"><path d="M0 2.300L6.800 1.300V7.500H0ZM7.700 1.200L16 0V7.500H7.700ZM0 8.400H6.800V14.700L0 13.700ZM7.700 8.400H16V16L7.700 14.800Z" fill="#fff"/></svg>
 <div class="searchbox d-flex align-items-center">
  <svg width="22" height="22" viewBox="0 0 22 22"><circle cx="11" cy="11" r="8.500" fill="none" stroke="#111" stroke-width="3"/></svg>
  <span class="flex-grow-1" style="margin-left:8px">Type here to search</span>
  <svg width="14" height="18" viewBox="0 0 14 18" style="margin-right:13px"><rect x="4" y=".5" width="6" height="11" rx="3" fill="none" stroke="#333"/><path d="M1.500 8C1.500 15 12.500 15 12.500 8M7 13.500V17M3.500 17.500H10.500" fill="none" stroke="#333"/></svg>
 </div>
 <svg width="16" height="16" viewBox="0 0 16 16" style="margin-left:16px"><path d="M1.500 .5V2.500H11V.5M1 5.500H11V10.500H1ZM1.500 15.500V13.500H11V15.500M14.500 .5V4M14.500 6.500V9.500M14.500 12V15.500" fill="none" stroke="#fff"/><rect x="13" y="5" width="3" height="3" fill="#fff"/></svg>
 <svg width="3" height="16" viewBox="0 0 3 16" style="margin-left:22px"><path d="M.5 0V16M2.500 0V16" stroke="#3a3a3a"/></svg>
 <svg width="24" height="22" viewBox="0 0 24 22" style="margin-left:26px"><path d="M1 1H9L11 3H23V21H1Z" fill="#f4cd5e"/><path d="M1 6H23V8H1Z" fill="#fde9a2"/><path d="M7 21V14H17V21H14V17H10V21Z" fill="#2a9fdf"/></svg>
 <svg width="24" height="24" viewBox="0 0 24 24" style="margin-left:25px"><path d="M12 12L3.500 3.800A12 12 0 0 1 23.300 8H12Z" fill="#db4437"/><path d="M3.500 3.800A12 12 0 0 0 10 23.800L14 14Z" fill="#0f9d58"/><path d="M23.300 8A12 12 0 0 1 10 23.800L16 11Z" fill="#f4c20d"/><circle cx="12" cy="12" r="5.500" fill="#fff"/><circle cx="12" cy="12" r="4.300" fill="#4285f4"/></svg>
 <div class="tasksel d-flex align-items-center justify-content-center" style="margin-left:17px"><svg width="24" height="24" viewBox="0 0 24 24"><rect width="24" height="24" fill="#2fb3f0"/><path d="M0 24V13L13 0H24L9 24Z" fill="#1579c4"/><path d="M0 16L15 0M15 0L20 24M5 13H22" stroke="#bfeaff" stroke-width=".8" fill="none"/></svg></div>
 <div class="ms-auto d-flex align-items-center">
  <div class="position-relative" style="width:24px;height:24px;margin-right:19px"><svg width="24" height="24" viewBox="0 0 24 24"><circle cx="11" cy="11" r="10.500" fill="#fff"/><circle cx="11" cy="11" r="9" fill="#1d87d8"/><circle cx="18" cy="17" r="4.500" fill="#f0a828"/></svg><span class="position-absolute fw-bold" style="left:6px;top:-3px;font-size:17px;color:#fff;letter-spacing:0">?</span></div>
  <svg width="18" height="18" viewBox="0 0 18 18" style="margin-right:21px"><circle cx="11.500" cy="4.500" r="3.200" fill="none" stroke="#ddd"/><circle cx="5.500" cy="8.500" r="2.600" fill="none" stroke="#ddd"/><path d="M1 16C1 12 9 12 9 16M9 10.500C10 8.500 15 8 17 12" fill="none" stroke="#ddd"/></svg>
  <svg width="14" height="8" viewBox="0 0 14 8" style="margin-right:10px"><path d="M1 7L7 1L13 7" fill="none" stroke="#ddd" stroke-width="1.100"/></svg>
  <svg width="14" height="14" viewBox="0 0 14 14" style="margin-right:6px"><path d="M1 13A12 12 0 0 1 13 1M4 13A9 9 0 0 1 13 4M7 13A6 6 0 0 1 13 7" fill="none" stroke="#aaa"/><circle cx="12" cy="12" r="1.500" fill="#ddd"/></svg>
  <svg width="16" height="12" viewBox="0 0 16 12" style="margin-right:10px"><path d="M2 0V3M5 0V3M.5 3H6.500V6H.5ZM3.500 6V12" stroke="#ddd" fill="none"/><rect x="6.500" y="2.500" width="9" height="7" fill="none" stroke="#ddd"/><rect x="8" y="4" width="5" height="4" fill="#ddd"/></svg>
  <svg width="17" height="14" viewBox="0 0 17 14" style="margin-right:10px"><path d="M.5 4.500H3L7 1V13L3 9.500H.5Z" fill="none" stroke="#ddd"/><path d="M9.500 4.500C10.500 6 10.500 8 9.500 9.500M12 3C13.500 5 13.500 9 12 11M14.500 1C16.500 4 16.500 10 14.500 13" fill="none" stroke="#ddd"/></svg>
  <svg width="18" height="18" viewBox="0 0 18 18" style="margin-right:13px"><path d="M7 13L13 1.500L16 3L10 14L7 15ZM10.500 4L14 6" fill="none" stroke="#ddd"/><path d="M7 8C2 8 1 13 3 15C5 17 7 15 8 14" fill="none" stroke="#ddd"/></svg>
  <span class="lang" style="margin-right:12px">ENG</span>
  <div class="clockbox"><div>01:28 AM</div><div>30-09-2019</div></div>
  <svg width="18" height="16" viewBox="0 0 18 16" style="margin:0 24px 0 15px"><path d="M.5 .5H17.500V12.500H11L9 15L7 12.500H.5Z" fill="none" stroke="#eee"/></svg>
 </div>
</div>
</body></html>
